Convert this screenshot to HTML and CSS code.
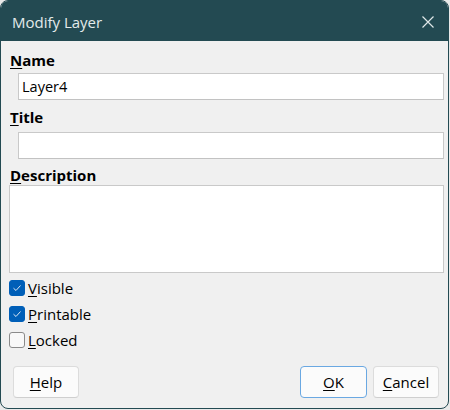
FILE: index.html
```html
<!DOCTYPE html>
<html>
<head>
<meta charset="utf-8">
<link rel="stylesheet" href="styles.css">
</head>
<body>
<div class="window">
  <div class="titlebar">
    <span class="title">Modify Layer</span>
    <svg class="close" width="12" height="12" viewBox="0 0 12 12"><path d="M0.5 0.5 L11.5 11.5 M11.5 0.5 L0.5 11.5" stroke="#dfe7e8" stroke-width="1.2" fill="none"/></svg>
  </div>
  <div class="content">
    <div class="label label-name"><u>N</u>ame</div>
    <div class="input input-name">Layer4</div>
    <div class="label label-title"><u>T</u>itle</div>
    <div class="input input-title"></div>
    <div class="label label-desc"><u>D</u>escription</div>
    <div class="textarea"></div>
    <div class="checks">
      <div class="check"><span class="box checked"><svg width="10" height="10" viewBox="0 0 10 10"><path d="M1.5 5.2 L4 7.5 L8.5 2.5" stroke="#dce8f5" stroke-width="1" fill="none"/></svg></span><span><u>V</u>isible</span></div>
      <div class="check"><span class="box checked"><svg width="10" height="10" viewBox="0 0 10 10"><path d="M1.5 5.2 L4 7.5 L8.5 2.5" stroke="#dce8f5" stroke-width="1" fill="none"/></svg></span><span><u>P</u>rintable</span></div>
      <div class="check"><span class="box"></span><span><u>L</u>ocked</span></div>
    </div>
    <div class="buttons">
      <div class="btn btn-help"><u>H</u>elp</div>
      <div class="spacer"></div>
      <div class="btn btn-ok"><u>O</u>K</div>
      <div class="btn btn-cancel"><u>C</u>ancel</div>
    </div>
  </div>
</div>
</body>
</html>
```
FILE: styles.css
```css
html, body {
  margin: 0;
  padding: 0;
  background: #e9e9e9;
}
body {
  font-family: "Open Sans", "Noto Sans", sans-serif;
  font-size: 14.5px;
  color: #000;
}
.window {
  box-sizing: border-box;
  width: 449px;
  height: 409px;
  border: 1px solid #234a52;
  border-radius: 8px;
  overflow: hidden;
  background: #f0f0f0;
  display: flex;
  flex-direction: column;
}
.titlebar {
  height: 40px;
  flex: none;
  background: #234a52;
  display: flex;
  align-items: center;
  padding: 0 14px 0 11px;
  color: #e3eaeb;
  font-size: 15px;
}
.title { flex: 1; margin-top: 2px; }
.close { display: block; margin-top: 2px; }
.content {
  flex: 1;
  display: flex;
  flex-direction: column;
  padding: 0 4px 0 8px;
}
.label {
  font-weight: 700;
  font-size: 15px;
  line-height: 20px;
  height: 20px;
  padding-left: 1px;
}
u { text-decoration: underline; text-underline-offset: 2px; text-decoration-thickness: 1px; }
.label-name { margin-top: 9px; }
.label-title { margin-top: 7px; }
.label-desc { margin-top: 6px; }
.input {
  box-sizing: border-box;
  margin-left: 9px;
  height: 27px;
  background: #fff;
  border: 1px solid #c9c9c9;
  border-bottom-color: #c2c2c2;
  padding-left: 3px;
  line-height: 25px;
  font-size: 14.5px;
}
.input-name { margin-top: 3px; }
.input-title { margin-top: 5px; }
.textarea {
  box-sizing: border-box;
  height: 88px;
  margin-left: 0;
  background: #fff;
  border: 1px solid #c9c9c9;
}
.checks {
  display: flex;
  flex-direction: column;
  gap: 10px;
  margin-top: 7px;
}
.check {
  display: flex;
  align-items: center;
  gap: 3px;
  height: 16px;
  line-height: 16px;
  font-size: 15px;
}
.box {
  box-sizing: border-box;
  width: 16px;
  height: 16px;
  border-radius: 3px;
  border: 1px solid #8a8a8a;
  background: #f8f8f8;
  display: flex;
  align-items: center;
  justify-content: center;
}
.box.checked {
  background: #005fb8;
  border-color: #005fb8;
}
.box svg { display: block; }
.buttons {
  display: flex;
  gap: 6px;
  margin-top: 18px;
  padding-left: 4px;
  padding-right: 5px;
}
.spacer { flex: 1; }
.btn {
  box-sizing: border-box;
  height: 32px;
  background: #fbfbfb;
  border: 1px solid #dcdcdc;
  border-bottom-color: #cfcfcf;
  border-radius: 4px;
  display: flex;
  align-items: center;
  justify-content: center;
  font-size: 15px;
}
.btn-help { width: 66px; }
.btn-ok { width: 67px; border-color: #6aa8e2; }
.btn-cancel { width: 66px; }
```
